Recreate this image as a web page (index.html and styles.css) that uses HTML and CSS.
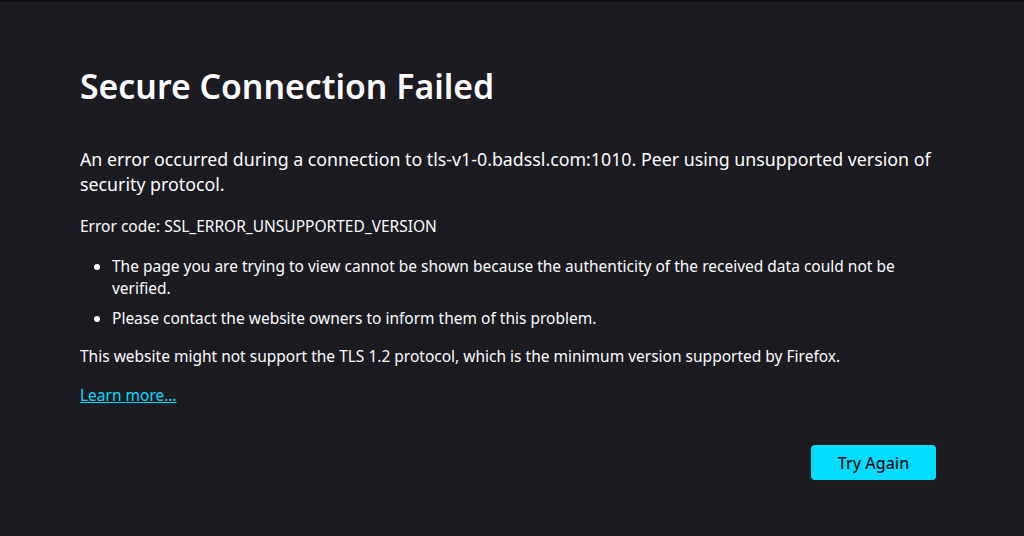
FILE: index.html
```html
<!DOCTYPE html>
<html>
<head>
<meta charset="utf-8">
<link rel="stylesheet" href="styles.css">
</head>
<body>
<div class="topline"></div>
<main class="container">
  <h1 class="title">Secure Connection Failed</h1>
  <p class="lead">An error occurred during a connection to tls-v1-0.badssl.com:1010. Peer using unsupported version of security protocol.</p>
  <p class="code">Error code: SSL_ERROR_UNSUPPORTED_VERSION</p>
  <ul class="list">
    <li>The page you are trying to view cannot be shown because the authenticity of the received data could not be verified.</li>
    <li>Please contact the website owners to inform them of this problem.</li>
  </ul>
  <p class="note">This website might not support the TLS 1.2 protocol, which is the minimum version supported by Firefox.</p>
  <p class="more"><a href="#" class="link">Learn more…</a></p>
  <div class="actions">
    <button class="btn">Try Again</button>
  </div>
</main>
</body>
</html>
```
FILE: styles.css
```css
html, body {
  margin: 0;
  padding: 0;
  height: 100%;
}
body {
  background: #1c1b22;
  color: #fbfbfe;
  font-family: "Noto Sans", "Open Sans", sans-serif;
  overflow: hidden;
}
.topline {
  height: 2px;
  background: #0f0e14;
}
.container {
  width: 864px;
  padding: 62px 0 0 80px;
}
.title {
  margin: 0;
  font-size: 33.8px;
  font-weight: 600;
  line-height: 44px;
}
.lead {
  margin: 39px 0 0;
  font-size: 17.8px;
  line-height: 25px;
}
.code {
  margin: 18px 0 0;
  font-size: 15.5px;
  line-height: 22px;
}
.list {
  margin: 18px 0 0;
  padding-left: 32px;
  font-size: 15.5px;
  line-height: 22px;
}
.list li + li {
  margin-top: 8px;
}
.note {
  margin: 16px 0 0;
  font-size: 15.5px;
  line-height: 22px;
}
.more {
  margin: 17px 0 0;
  font-size: 15.5px;
  line-height: 22px;
}
.link {
  color: #00ddff;
  text-decoration: underline;
}
.actions {
  display: flex;
  justify-content: flex-end;
  margin-top: 39px;
  padding-right: 8px;
}
.btn {
  width: 125px;
  height: 35px;
  background: #00ddff;
  color: #15141a;
  border: none;
  border-radius: 4px;
  font-family: inherit;
  font-size: 16px;
  font-weight: 500;
}
```
